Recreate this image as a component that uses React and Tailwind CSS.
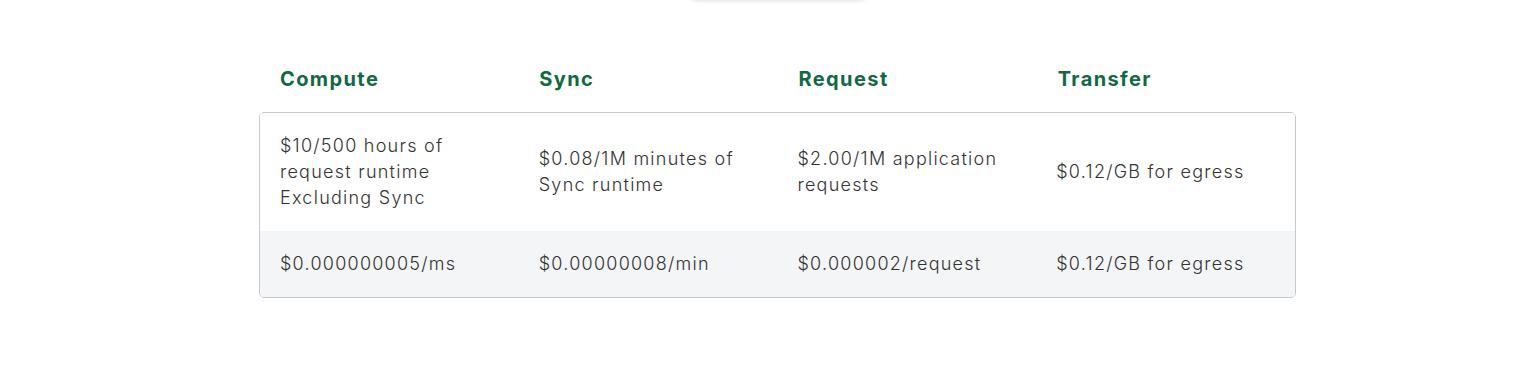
const COLUMNS = ['Compute', 'Sync', 'Request', 'Transfer']

const ROWS = [
  {
    bg: 'bg-white',
    cells: [
      <>$10/500 hours of request runtime<br />Excluding Sync</>,
      '$0.08/1M minutes of Sync runtime',
      '$2.00/1M application requests',
      '$0.12/GB for egress',
    ],
  },
  {
    bg: 'bg-[#f4f5f7]',
    cells: ['$0.000000005/ms', '$0.00000008/min', '$0.000002/request', '$0.12/GB for egress'],
  },
]

export default function App() {
  return (
    <div className="w-[1536px] h-[371px] bg-white font-['Inter',sans-serif] overflow-hidden pl-[19px]">
      {/* tab shadow peeking from above */}
      <div className="flex justify-center">
        <div className="w-[176px] h-[20px] -mt-[20px] rounded-md bg-white shadow-[0_1px_4px_rgba(0,0,0,0.12)]" />
      </div>

      <div className="w-[1037px] mx-auto pt-[65px]">
        {/* header */}
        <div className="grid grid-cols-4 pb-[19px]">
          {COLUMNS.map(col => (
            <div key={col} className="px-[21px] text-[20px] leading-[28px] font-bold tracking-[1.4px] text-[#126843]">{col}</div>
          ))}
        </div>

        {/* table */}
        <div className="border border-[#c6cacf] rounded-[5px] overflow-hidden">
          {ROWS.map((row, i) => (
            <div key={i} className={`grid grid-cols-4 items-center ${row.bg}`}>
              {row.cells.map((cell, j) => (
                <div key={j} className="px-[20px] py-[20px] text-[18px] leading-[26px] tracking-[1.25px] text-[#333] font-light">{cell}</div>
              ))}
            </div>
          ))}
        </div>
      </div>
    </div>
  )
}
